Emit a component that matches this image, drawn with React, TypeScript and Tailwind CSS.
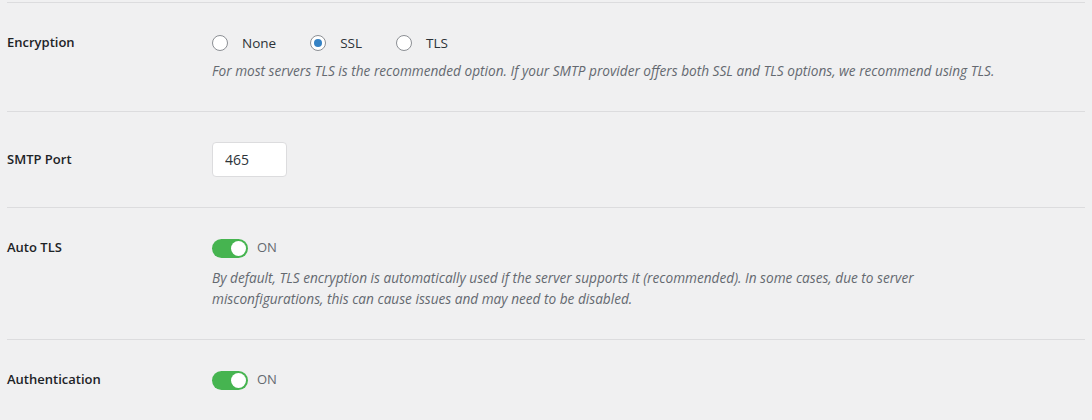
import { useState } from "react"

function Radio({ checked, label, onClick }: { checked: boolean; label: string; onClick: () => void }) {
  return (
    <label className="flex items-center gap-[14px] cursor-pointer" onClick={onClick}>
      <span className="w-4 h-4 rounded-full border border-[#8c8f94] bg-white flex items-center justify-center shrink-0">
        {checked && <span className="w-2 h-2 rounded-full bg-[#3582c4]" />}
      </span>
      <span className="text-[13.5px] text-[#2c3338]">{label}</span>
    </label>
  )
}

function Toggle({ on, onClick }: { on: boolean; onClick: () => void }) {
  return (
    <div className="flex items-center gap-[9px] h-5">
      <button
        onClick={onClick}
        className={`w-9 h-[19px] rounded-full flex items-center px-[2px] ${on ? "bg-[#46b450] justify-end" : "bg-[#c3c4c7] justify-start"}`}
      >
        <span className="w-[15px] h-[15px] rounded-full bg-white" />
      </button>
      <span className="text-[13px] text-[#646970]">{on ? "ON" : "OFF"}</span>
    </div>
  )
}

function Row({ label, tall, children }: { label: string; tall?: boolean; children: React.ReactNode }) {
  return (
    <div className="flex border-t border-[#dcdcde] py-[30px]">
      <div
        className={`w-[205px] shrink-0 flex items-center text-[13px] font-semibold text-[#1d2327] ${tall ? "h-[35px]" : "h-5"}`}
      >
        {label}
      </div>
      <div className="flex-1">{children}</div>
    </div>
  )
}

export default function App() {
  const [enc, setEnc] = useState("ssl")
  const [autoTls, setAutoTls] = useState(true)
  const [auth, setAuth] = useState(true)

  return (
    <div className="min-h-screen bg-[#f0f0f1] pt-[2px] px-[7px] font-['Open_Sans',sans-serif]">
      <Row label="Encryption">
        <div className="flex items-center gap-[34px] h-5">
          <Radio checked={enc === "none"} label="None" onClick={() => setEnc("none")} />
          <Radio checked={enc === "ssl"} label="SSL" onClick={() => setEnc("ssl")} />
          <Radio checked={enc === "tls"} label="TLS" onClick={() => setEnc("tls")} />
        </div>
        <p className="mt-[7px] max-w-[800px] text-[13.65px] leading-[21px] italic text-[#646970]">
          For most servers TLS is the recommended option. If your SMTP provider offers both SSL and TLS options, we recommend using TLS.
        </p>
      </Row>

      <Row label="SMTP Port" tall>
        <input
          type="text"
          defaultValue="465"
          className="block w-[75px] h-[35px] rounded-[4px] border border-[#dcdcde] bg-white px-[12px] text-[14px] text-[#2c3338] outline-none"
        />
      </Row>

      <Row label="Auto TLS">
        <Toggle on={autoTls} onClick={() => setAutoTls(!autoTls)} />
        <p className="mt-[9px] max-w-[800px] text-[13.65px] leading-[21px] italic text-[#646970]">
          By default, TLS encryption is automatically used if the server supports it (recommended). In some cases, due to server misconfigurations, this can cause issues and may need to be disabled.
        </p>
      </Row>

      <Row label="Authentication">
        <Toggle on={auth} onClick={() => setAuth(!auth)} />
      </Row>
    </div>
  )
}
